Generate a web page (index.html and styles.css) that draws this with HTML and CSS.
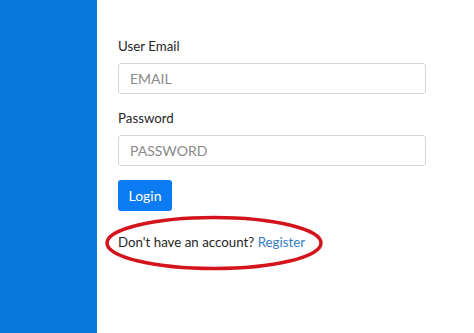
FILE: index.html
```html
<!DOCTYPE html>
<html>
<head>
<meta charset="utf-8">
<link rel="stylesheet" href="styles.css">
</head>
<body>
<div class="page">
  <aside class="sidebar"></aside>
  <main class="main">
    <form class="login-form">
      <label class="field-label">User Email</label>
      <input class="field-input" type="text" placeholder="EMAIL">
      <label class="field-label">Password</label>
      <input class="field-input" type="text" placeholder="PASSWORD">
      <button class="btn-login" type="button">Login</button>
      <p class="register-line">Don't have an account? <a class="register-link" href="#">Register</a>
        <svg class="circle-mark" viewBox="0 0 222 58" width="222" height="58">
          <ellipse cx="111" cy="29" rx="107" ry="25.5" fill="none" stroke="#d3141c" stroke-width="3.5"/>
        </svg>
      </p>
    </form>
  </main>
</div>
</body>
</html>
```

FILE: styles.css
```css
html, body {
  margin: 0;
  padding: 0;
  background: #ffffff;
}
.page {
  display: flex;
  width: 474px;
  height: 333px;
  font-family: Lato, "Open Sans", sans-serif;
  font-size: 13.3px;
  color: #222;
}
.sidebar {
  width: 97px;
  flex: none;
  background: #0b78de;
}
.main {
  flex: 1;
  padding: 36px 0 0 21px;
}
.login-form {
  display: flex;
  flex-direction: column;
  align-items: flex-start;
  width: 308px;
}
.field-label {
  line-height: 21px;
  margin-bottom: 6px;
  color: #262626;
}
.field-input {
  box-sizing: border-box;
  width: 308px;
  height: 31px;
  border: 1px solid #d6d6d6;
  border-radius: 3px;
  padding: 0 11px;
  font-family: inherit;
  font-size: 14px;
  margin-bottom: 14px;
  outline: none;
}
.field-input::placeholder {
  color: #8a8a8a;
}
.btn-login {
  box-sizing: border-box;
  height: 31px;
  width: 54px;
  border: none;
  border-radius: 3px;
  background: #0d7cf2;
  color: #fff;
  font-family: inherit;
  font-size: 14px;
  padding: 0;
  cursor: pointer;
}
.register-line {
  position: relative;
  margin: 21px 0 0 0;
  line-height: 21px;
  color: #262626;
}
.register-link {
  color: #3580c0;
  text-decoration: none;
}
.circle-mark {
  position: absolute;
  left: -15px;
  top: -18px;
}
```
